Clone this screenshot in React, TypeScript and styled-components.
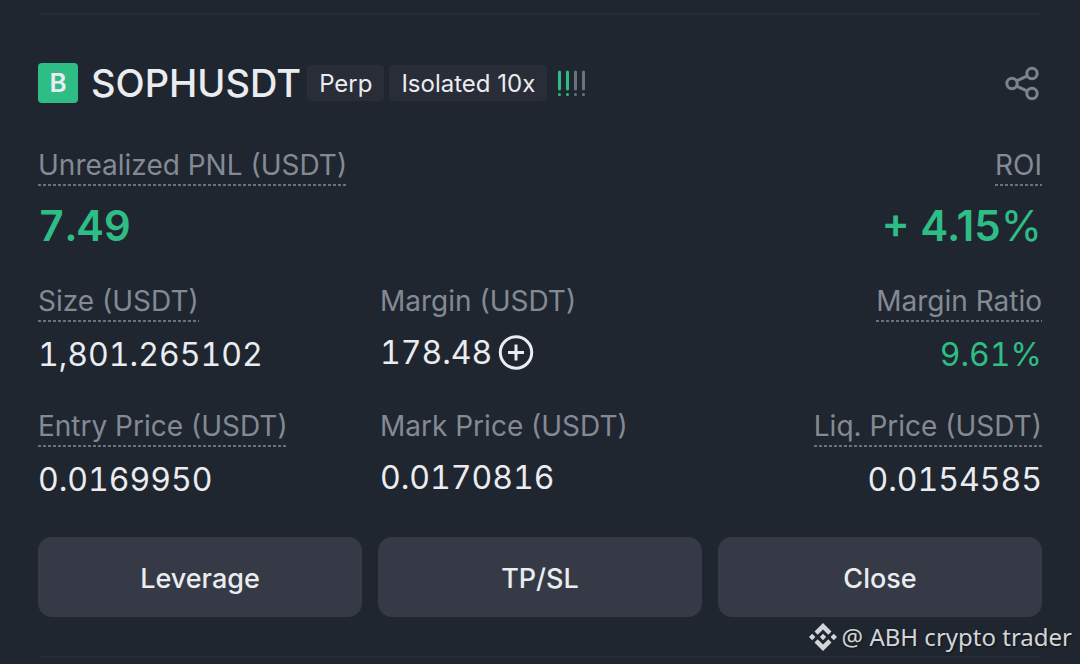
import React from "react";
import styled, { createGlobalStyle } from "styled-components";

const GlobalStyle = createGlobalStyle`
  *, *::before, *::after { box-sizing: border-box; }
  body {
    margin: 0;
    background: #1f2630;
    color: #eaecef;
    font-family: Inter, "Liberation Sans", sans-serif;
  }
`;

const Page = styled.main`
  position: relative;
  padding: 13px 38px 5px;
`;

const Divider = styled.hr`
  height: 2px;
  margin: 0 2px;
  border: 0;
  background: #272d38;
`;

const Header = styled.header`
  display: flex;
  align-items: center;
  height: 40px;
  margin-top: 48px;
`;

const SideBadge = styled.span`
  display: grid;
  place-items: center;
  width: 40px;
  height: 40px;
  border-radius: 4px;
  background: #2ebd85;
  font-size: 26px;
  font-weight: 600;
  line-height: 40px;
`;

const Symbol = styled.h1`
  margin: 0 6px 0 13px;
  font-size: 38px;
  font-weight: 500;
  line-height: 42px;
`;

const Tag = styled.span`
  margin-right: 5px;
  padding: 2px 12px 0;
  border-radius: 4px;
  background: #282d38;
  font-size: 24px;
  line-height: 34px;
  white-space: nowrap;
`;

const RiskIcon = styled.svg`
  margin-left: 3px;
`;

const IconButton = styled.button`
  display: flex;
  padding: 0;
  border: 0;
  background: none;
  color: inherit;
  cursor: pointer;
`;

const ShareButton = styled(IconButton)`
  margin-left: auto;
  color: #7d838d;
`;

const Summary = styled.dl`
  display: flex;
  justify-content: space-between;
  margin: 45px 0 0;
`;

const Stats = styled.dl`
  display: grid;
  grid-template-columns: repeat(3, 1fr);
  gap: 34px 16px;
  margin: 34px 0 0;
`;

const Cell = styled.div<{ $end?: boolean; $inset?: boolean }>`
  display: flex;
  flex-direction: column;
  align-items: ${(p) => (p.$end ? "flex-end" : "flex-start")};
  padding-left: ${(p) => (p.$inset ? 2 : 0)}px;
`;

const Label = styled.dt<{ $dashed?: boolean }>`
  padding-bottom: ${(p) => (p.$dashed ? 4 : 2)}px;
  background: ${(p) =>
    p.$dashed
      ? "repeating-linear-gradient(90deg, #6b727c 0 3px, transparent 3px 5px) left bottom / 100% 2px no-repeat"
      : "none"};
  color: #848a94;
  font-size: 28px;
  line-height: 34px;
  white-space: nowrap;
`;

const Value = styled.dd<{ $up?: boolean }>`
  display: flex;
  align-items: center;
  gap: 6px;
  margin: 13px 0 0;
  color: ${(p) => (p.$up ? "#2ebd85" : "#eaecef")};
  font-size: 32px;
  font-variant-numeric: tabular-nums;
  line-height: 40px;
`;

const BigValue = styled.dd<{ $tabular?: boolean }>`
  margin: 16px 0 0;
  color: #2ebd85;
  font-size: 42px;
  font-weight: 600;
  font-variant-numeric: ${(p) => (p.$tabular ? "tabular-nums" : "normal")};
  line-height: 48px;
`;

const Percent = styled.span`
  font-weight: 400;
`;

const Actions = styled.div`
  display: grid;
  grid-template-columns: repeat(3, 1fr);
  gap: 16px;
  margin: 37px 0 39px;
`;

const ActionButton = styled.button`
  height: 80px;
  padding: 2px 16px 0;
  border: 0;
  border-radius: 14px;
  background: #353a46;
  color: #eaecef;
  font-family: inherit;
  font-size: 27px;
  font-weight: 500;
  cursor: pointer;
`;

const Watermark = styled.div`
  position: absolute;
  right: 8px;
  bottom: 10px;
  display: flex;
  align-items: center;
  gap: 5px;
  color: #d3d5d8;
  font-family: "Noto Sans", sans-serif;
  font-size: 24px;
  line-height: 32px;
  text-shadow: 1px 1px 2px #11151b;
  white-space: nowrap;
`;

const stats = [
  { label: "Size (USDT)", value: "1,801.265102", dashed: true },
  { label: "Margin (USDT)", value: "178.48", inset: true, add: true },
  { label: "Margin Ratio", value: "9.61%", dashed: true, end: true, up: true },
  { label: "Entry Price (USDT)", value: "0.0169950", dashed: true },
  { label: "Mark Price (USDT)", value: "0.0170816", inset: true },
  { label: "Liq. Price (USDT)", value: "0.0154585", dashed: true, end: true },
];

function RiskLevel() {
  return (
    <RiskIcon width="32" height="28" viewBox="0 0 32 28" fill="none" strokeWidth="3" strokeLinecap="round" aria-hidden="true">
      {[4.5, 12.5, 20.5, 28.5].map((x, i) => (
        <path key={x} d={`M${x} 3V20M${x} 25.500V25.510`} stroke={i < 2 ? "#2ebd85" : "#6b727e"} />
      ))}
    </RiskIcon>
  );
}

function ShareIcon() {
  return (
    <svg width="38" height="36" viewBox="0 0 38 36" fill="none" stroke="currentColor" strokeWidth="3" aria-hidden="true">
      <circle cx="8" cy="18.500" r="5.200" />
      <circle cx="28" cy="8.500" r="5.200" />
      <circle cx="28" cy="28.500" r="5.200" />
      <path d="M12.600 16L23.400 10.800M12.600 21L23.400 26.200" />
    </svg>
  );
}

function AddIcon() {
  return (
    <svg width="36" height="36" viewBox="0 0 36 36" fill="none" stroke="currentColor" strokeWidth="3" aria-hidden="true">
      <circle cx="18" cy="17.500" r="15.700" />
      <path d="M10 17.500H26M18 9.500V25.500" />
    </svg>
  );
}

function DiamondLogo() {
  return (
    <svg width="28" height="28" viewBox="0 0 28 28" fill="currentColor" aria-hidden="true">
      <path d="M14 0L22.500 8.500L19.300 11.700L14 6.400L8.700 11.700L5.500 8.500Z" />
      <path d="M14 28L22.500 19.500L19.300 16.300L14 21.600L8.700 16.300L5.500 19.500Z" />
      <path d="M3.200 10.800L6.400 14L3.200 17.200L0 14Z" />
      <path d="M24.800 10.800L28 14L24.800 17.200L21.600 14Z" />
      <path d="M14 10.800L17.200 14L14 17.200L10.800 14Z" />
    </svg>
  );
}

export default function App() {
  return (
    <>
      <GlobalStyle />
      <Page>
        <Divider />
        <Header>
          <SideBadge>B</SideBadge>
          <Symbol>SOPHUSDT</Symbol>
          <Tag>Perp</Tag>
          <Tag>Isolated 10x</Tag>
          <RiskLevel />
          <ShareButton type="button" aria-label="Share position">
            <ShareIcon />
          </ShareButton>
        </Header>
        <Summary>
          <Cell>
            <Label $dashed>Unrealized PNL (USDT)</Label>
            <BigValue $tabular>7.49</BigValue>
          </Cell>
          <Cell $end>
            <Label $dashed>ROI</Label>
            <BigValue>
              + 4.15<Percent>%</Percent>
            </BigValue>
          </Cell>
        </Summary>
        <Stats>
          {stats.map((s) => (
            <Cell key={s.label} $end={s.end} $inset={s.inset}>
              <Label $dashed={s.dashed}>{s.label}</Label>
              <Value $up={s.up}>
                {s.value}
                {s.add && (
                  <IconButton type="button" aria-label="Add margin">
                    <AddIcon />
                  </IconButton>
                )}
              </Value>
            </Cell>
          ))}
        </Stats>
        <Actions>
          <ActionButton type="button">Leverage</ActionButton>
          <ActionButton type="button">TP/SL</ActionButton>
          <ActionButton type="button">Close</ActionButton>
        </Actions>
        <Divider />
        <Watermark>
          <DiamondLogo />
          <span>@ ABH crypto trader</span>
        </Watermark>
      </Page>
    </>
  );
}
